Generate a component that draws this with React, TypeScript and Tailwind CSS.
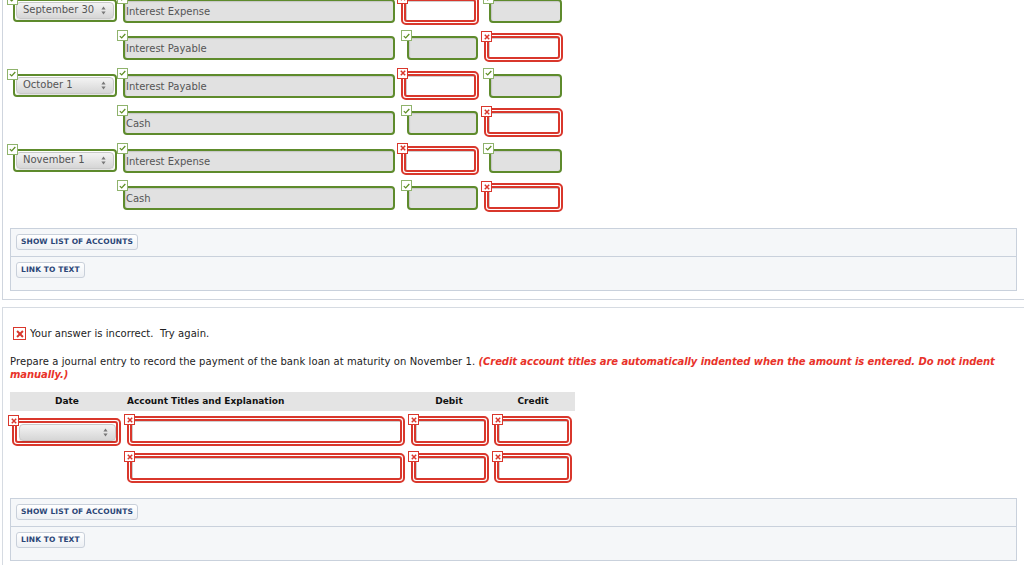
import React from "react";

const FONT = "font-['DejaVu_Sans','Verdana',sans-serif]";

function CheckIcon({ className = "" }: { className?: string }) {
  return (
    <span
      className={`absolute z-10 flex h-[11px] w-[11px] items-center justify-center border border-[#8fb36c] bg-white ${className}`}
    >
      <svg width="7" height="6" viewBox="0 0 7 6">
        <path d="M0.8 3.1 L2.7 4.9 L6.3 1" stroke="#5f8f26" strokeWidth="1.3" fill="none" />
      </svg>
    </span>
  );
}

function XIcon({ className = "", size = 11 }: { className?: string; size?: number }) {
  const big = size > 11;
  return (
    <span
      className={`absolute z-10 flex items-center justify-center border border-[#d9372c] bg-white ${
        big ? "h-[13px] w-[13px]" : "h-[11px] w-[11px]"
      } ${className}`}
    >
      <svg width={big ? 8 : 6} height={big ? 8 : 6} viewBox="0 0 6 6">
        <path d="M0.8 0.8 L5.2 5.2 M5.2 0.8 L0.8 5.2" stroke="#d9372c" strokeWidth="1.5" fill="none" />
      </svg>
    </span>
  );
}

function Arrows() {
  return (
    <svg width="5" height="9" viewBox="0 0 5 9">
      <path d="M2.5 0.5 L4.6 3.5 L0.4 3.5 Z" fill="#777" />
      <path d="M2.5 8.5 L4.6 5.5 L0.4 5.5 Z" fill="#777" />
    </svg>
  );
}

function Select({ label }: { label: string }) {
  return (
    <div className="flex h-[17px] w-[98px] items-center justify-between rounded-[4px] border border-[#c9c9c9] bg-linear-to-b from-[#f3f3f3] to-[#d6d6d6] pl-[6px] pr-[7px] text-[10px] leading-none text-[#555] shadow-[0_1px_1px_rgba(0,0,0,0.12)]">
      <span>{label}</span>
      <Arrows />
    </div>
  );
}

function GreenField({ w, children }: { w: string; children?: React.ReactNode }) {
  return (
    <div
      className={`flex h-[24px] ${w} items-center rounded-[4px] border-2 border-[#5e8b2c] bg-[#e1e1e1] pl-[1px] pt-[1px] text-[10px] text-[#555] shadow-[inset_1px_1px_1px_rgba(0,0,0,0.12)]`}
    >
      {children}
    </div>
  );
}

function RedBox({ w, h, children }: { w: string; h: string; children?: React.ReactNode }) {
  return (
    <div className={`${w} ${h} rounded-[5px] border-2 border-[#d9372c] bg-white p-[1px]`}>
      <div className="flex h-full items-center rounded-[3px] border-2 border-[#d9372c] bg-white pl-[2px] shadow-[inset_1px_1px_0_#cfcfcf]">
        {children}
      </div>
    </div>
  );
}

type St = "g" | "r";
type Row = { date?: string; acct: string; debit: St; credit: St };

const rows: Row[] = [
  { date: "September 30", acct: "Interest Expense", debit: "r", credit: "g" },
  { acct: "Interest Payable", debit: "g", credit: "r" },
  { date: "October 1", acct: "Interest Payable", debit: "r", credit: "g" },
  { acct: "Cash", debit: "g", credit: "r" },
  { date: "November 1", acct: "Interest Expense", debit: "r", credit: "g" },
  { acct: "Cash", debit: "g", credit: "r" },
];

function TopRow({ r }: { r: Row }) {
  return (
    <div className="flex h-[37.5px]">
      <div className="relative ml-[4px] w-[110px]">
        {r.date && (
          <>
            <CheckIcon className="left-0 top-[1px]" />
            <div className="ml-[6px] mt-[6px] flex h-[23px] w-[104px] items-center rounded-[4px] border-2 border-[#5e8b2c] bg-white p-[1px]">
              <Select label={r.date} />
            </div>
          </>
        )}
      </div>
      <div className="relative w-[278px]">
        <CheckIcon className="left-0 top-0" />
        <div className="ml-[6px] mt-[6px]">
          <GreenField w="w-[272px]">{r.acct}</GreenField>
        </div>
      </div>
      <div className="relative ml-[6px] w-[82px]">
        {r.debit === "g" ? (
          <>
            <CheckIcon className="left-0 top-0" />
            <div className="ml-[6px] mt-[6px]">
              <GreenField w="w-[71px]" />
            </div>
          </>
        ) : (
          <>
            <XIcon className="left-[-4px] top-0" />
            <div className="mt-[3px]">
              <RedBox w="w-[78px]" h="h-[29px]" />
            </div>
          </>
        )}
      </div>
      <div className="relative w-[82px]">
        {r.credit === "g" ? (
          <>
            <CheckIcon className="left-0 top-0" />
            <div className="ml-[6px] mt-[6px]">
              <GreenField w="w-[73px]" />
            </div>
          </>
        ) : (
          <>
            <XIcon className="left-[-2px] top-[1px]" />
            <div className="ml-[1px] mt-[3px]">
              <RedBox w="w-[79px]" h="h-[29px]" />
            </div>
          </>
        )}
      </div>
    </div>
  );
}

function Btn({ children }: { children: React.ReactNode }) {
  return (
    <div className="flex h-[16px] items-center rounded-[3px] border border-[#c9d0da] bg-linear-to-b from-white to-[#edf0f4] px-[4px] text-[7.5px] font-bold leading-none tracking-[0.1px] text-[#2b4677]">
      {children}
    </div>
  );
}

function LinksBox() {
  return (
    <div className="ml-[7px] w-[1007px] border border-[#c9d1dc] bg-[#f5f7f9]">
      <div className="flex h-[28px] items-start border-b border-[#c9d1dc] pl-[5px] pt-[5px]">
        <Btn>SHOW LIST OF ACCOUNTS</Btn>
      </div>
      <div className="flex h-[33px] items-start pl-[5px] pt-[5px]">
        <Btn>LINK TO TEXT</Btn>
      </div>
    </div>
  );
}

function BottomRow({ first }: { first: boolean }) {
  return (
    <div className="flex h-[37px]">
      <div className="relative ml-[5px] w-[116px]">
        {first && (
          <>
            <XIcon className="left-0 top-[1px]" />
            <div className="ml-[4px] mt-[4px] h-[28px] w-[109px] rounded-[5px] border-2 border-[#d9372c] bg-white p-[1px]">
              <div className="flex h-full items-center rounded-[3px] border-2 border-[#d9372c] pl-[2px]">
                <Select label="" />
              </div>
            </div>
          </>
        )}
      </div>
      <div className="relative w-[284px]">
        <XIcon className="left-0 top-0" />
        <div className="ml-[3px] mt-[2px]">
          <RedBox w="w-[278px]" h="h-[30px]" />
        </div>
      </div>
      <div className="relative w-[84px]">
        <XIcon className="left-0 top-0" />
        <div className="ml-[3px] mt-[2px]">
          <RedBox w="w-[78px]" h="h-[30px]" />
        </div>
      </div>
      <div className="relative w-[84px]">
        <XIcon className="left-0 top-0" />
        <div className="ml-[2px] mt-[2px]">
          <RedBox w="w-[78px]" h="h-[30px]" />
        </div>
      </div>
    </div>
  );
}

export default function App() {
  return (
    <div className={`h-[565px] w-[1024px] overflow-hidden bg-white ${FONT}`}>
      {/* top panel */}
      <div className="ml-[2px] h-[300px] overflow-hidden border-b border-l border-[#cfd5de]">
        <div className="mt-[-7.5px]">
          {rows.map((r, i) => (
            <TopRow key={i} r={r} />
          ))}
        </div>
        <div className="mt-[10.5px]">
          <LinksBox />
        </div>
      </div>

      {/* bottom panel */}
      <div className="ml-[2px] mt-[7px] h-[270px] border-l border-t border-[#d6dbe2]">
        <div className="relative ml-[10px] mt-[19px] flex h-[13px] items-center">
          <XIcon size={13} className="left-0 top-0" />
          <span className="ml-[17px] text-[10px] leading-none tracking-[0.05px] text-[#222]">
            Your answer is incorrect.&nbsp; Try again.
          </span>
        </div>
        <div className="ml-[7px] mt-[15px] text-[10px] leading-[13px] text-[#222]">
          <div className="whitespace-nowrap tracking-[0.08px]">
            Prepare a journal entry to record the payment of the bank loan at maturity on November 1.{" "}
            <span className="font-bold italic tracking-[-0.08px] text-[#e8322a]">
              (Credit account titles are automatically indented when the amount is entered. Do not indent
            </span>
          </div>
          <div className="font-bold italic tracking-[-0.08px] text-[#e8322a]">manually.)</div>
        </div>
        <div className="ml-[7px] mt-[11px] flex h-[19px] w-[565px] items-center bg-[#e4e4e4] text-[9px] font-bold text-[#111]">
          <div className="w-[114px] text-center">Date</div>
          <div className="w-[283px] pl-[3px]">Account Titles and Explanation</div>
          <div className="w-[84px] text-center">Debit</div>
          <div className="w-[84px] text-center">Credit</div>
        </div>
        <div className="mt-[3px]">
          <BottomRow first />
          <BottomRow first={false} />
        </div>
        <div className="mt-[10px]">
          <LinksBox />
        </div>
      </div>
    </div>
  );
}
